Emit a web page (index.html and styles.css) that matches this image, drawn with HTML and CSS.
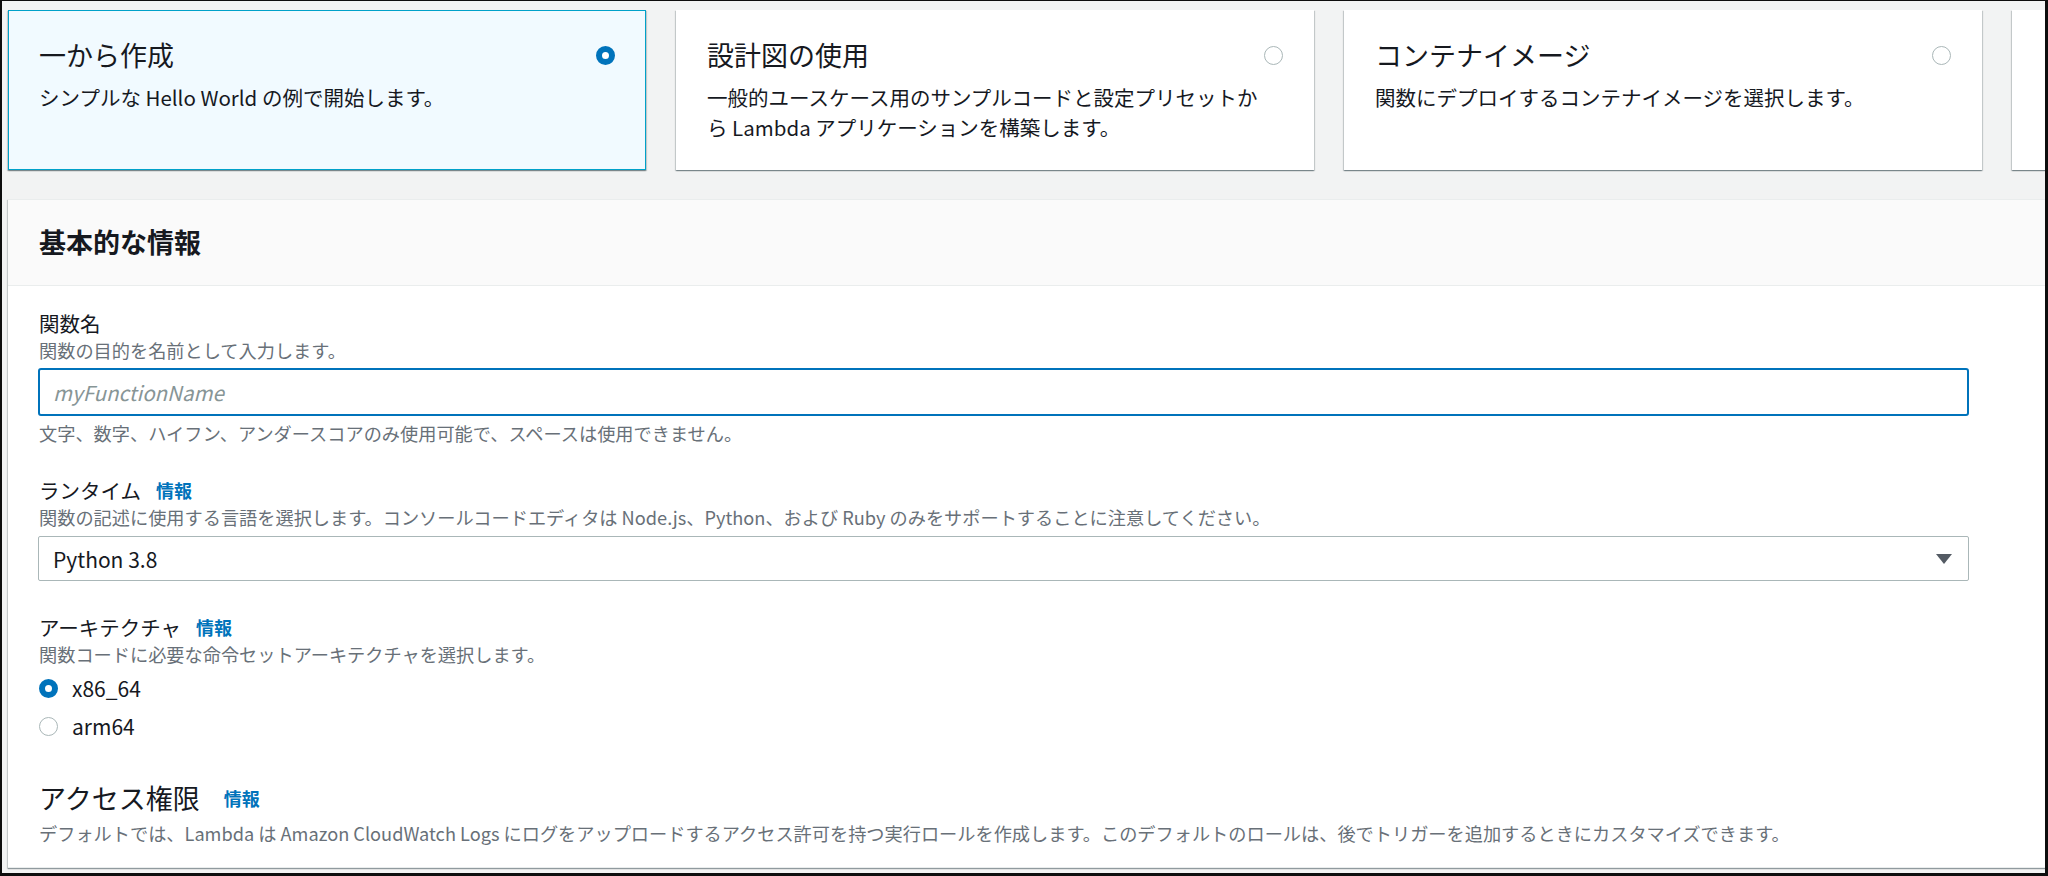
FILE: index.html
```html
<!doctype html>
<html lang="ja">
  <head>
    <meta charset="UTF-8" />
    <title>関数の作成</title>
    <link rel="stylesheet" href="styles.css">
  </head>

  <body>
    <div class="frame">
      <div class="tiles">
        <div class="tile selected">
          <div class="tile_text">
            <div class="tile_title">一から作成</div>
            <div class="tile_desc">シンプルな Hello World の例で開始します。</div>
          </div>
          <span class="radio checked"></span>
        </div>
        <div class="tile">
          <div class="tile_text">
            <div class="tile_title">設計図の使用</div>
            <div class="tile_desc">
              一般的ユースケース用のサンプルコードと設定プリセットか<br />ら Lambda アプリケーションを構築します。
            </div>
          </div>
          <span class="radio"></span>
        </div>
        <div class="tile">
          <div class="tile_text">
            <div class="tile_title">コンテナイメージ</div>
            <div class="tile_desc">関数にデプロイするコンテナイメージを選択します。</div>
          </div>
          <span class="radio"></span>
        </div>
        <div class="tile"></div>
      </div>

      <div class="panel">
        <div class="panel_header">
          <h2>基本的な情報</h2>
        </div>
        <div class="panel_body">
          <div class="form">
            <div class="label">関数名</div>
            <div class="desc">関数の目的を名前として入力します。</div>
            <input class="text_input" type="text" placeholder="myFunctionName" />
            <div class="desc constraint">文字、数字、ハイフン、アンダースコアのみ使用可能で、スペースは使用できません。</div>

            <div class="label field_gap">ランタイム <a class="info">情報</a></div>
            <div class="desc">関数の記述に使用する言語を選択します。コンソールコードエディタは Node.js、Python、および Ruby のみをサポートすることに注意してください。</div>
            <div class="select">
              <span>Python 3.8</span>
              <svg class="caret" width="16" height="10" viewBox="0 0 16 10">
                <path d="M0 0 H16 L8 10 Z" fill="#545b64" />
              </svg>
            </div>

            <div class="label field_gap2">アーキテクチャ <a class="info">情報</a></div>
            <div class="desc">関数コードに必要な命令セットアーキテクチャを選択します。</div>
            <div class="radios">
              <div class="radio_row"><span class="radio checked"></span>x86_64</div>
              <div class="radio_row"><span class="radio"></span>arm64</div>
            </div>

            <h3 class="sub_heading">アクセス権限 <a class="info">情報</a></h3>
            <div class="desc access">デフォルトでは、Lambda は Amazon CloudWatch Logs にログをアップロードするアクセス許可を持つ実行ロールを作成します。このデフォルトのロールは、後でトリガーを追加するときにカスタマイズできます。</div>
          </div>
        </div>
      </div>
    </div>
  </body>
</html>
```

FILE: styles.css
```css
body {
  margin: 0;
  font-family: "Noto Sans CJK JP", "Noto Sans", sans-serif;
  color: #16191f;
}

.frame {
  width: 2048px;
  height: 876px;
  box-sizing: border-box;
  border: solid #0d0d0d;
  border-width: 1px 3px 3px 2px;
  background-color: #f2f3f3;
  overflow: hidden;
  padding: 9px 0 0 6px;
}

.tiles {
  display: flex;
  gap: 30px;
}

.tile {
  flex: none;
  width: 638px;
  height: 160px;
  box-sizing: border-box;
  border: 1px solid transparent;
  background-color: white;
  padding: 27px 30px 0 30px;
  display: flex;
  justify-content: space-between;
  align-items: flex-start;
  box-shadow: 0 1px 1px 0 rgba(0, 28, 36, 0.3), 1px 1px 1px 0 rgba(0, 28, 36, 0.15),
    -1px 1px 1px 0 rgba(0, 28, 36, 0.15);
}

.tile.selected {
  background-color: #f1faff;
  border-color: #00a1c9;
}

.tile_title {
  font-size: 27px;
  line-height: 34px;
  margin-bottom: 10px;
}

.tile_desc {
  font-size: 20.5px;
  line-height: 30px;
}

.radio {
  flex: none;
  display: inline-block;
  width: 19px;
  height: 19px;
  box-sizing: border-box;
  border-radius: 50%;
  border: 1.5px solid #aab7b8;
  background-color: white;
}

.radio.checked {
  border: 6px solid #0073bb;
}

.tile .radio {
  margin-top: 8px;
}

.panel {
  margin-top: 29px;
  margin-right: -20px;
  background-color: white;
  border-top: 1px solid #eaeded;
  box-shadow: 0 1px 1px 0 rgba(0, 28, 36, 0.3), -1px 1px 1px 0 rgba(0, 28, 36, 0.15);
}

.panel_header {
  background-color: #fafafa;
  border-bottom: 1px solid #eaeded;
  padding: 25px 30px 26px 31px;
}

.panel_header h2 {
  margin: 0;
  font-size: 27px;
  line-height: 34px;
  font-weight: bold;
}

.panel_body {
  padding: 24px 30px 22px 30px;
  border-bottom: 1px solid #eaeded;
}

.form {
  width: 1931px;
}

.label {
  display: flex;
  align-items: center;
  font-size: 20.5px;
  line-height: 26px;
  padding-left: 1px;
}

.field_gap {
  margin-top: 32px;
}

.field_gap2 {
  margin-top: 33px;
}

.info {
  color: #0073bb;
  font-weight: bold;
  font-size: 18px;
  margin-left: 15px;
}

.desc {
  margin-top: 2px;
  font-size: 18.2px;
  line-height: 24px;
  color: #687078;
  padding-left: 1px;
}

.constraint {
  margin-top: 5px;
}

.text_input {
  display: block;
  margin-top: 6px;
  width: 100%;
  height: 48px;
  box-sizing: border-box;
  border: 2px solid #0073bb;
  border-radius: 3px;
  padding: 0 13px;
  font-family: inherit;
  font-size: 20.5px;
  outline: none;
}

.text_input::placeholder {
  color: #879596;
  font-style: italic;
}

.select {
  margin-top: 7px;
  height: 45px;
  box-sizing: border-box;
  border: 1px solid #aab7b8;
  border-radius: 2px;
  display: flex;
  align-items: center;
  justify-content: space-between;
  padding: 0 16px 0 14px;
  font-size: 21px;
}

.caret {
  display: block;
}

.radios {
  margin-top: 3px;
}

.radio_row {
  height: 38px;
  display: flex;
  align-items: center;
  gap: 14px;
  font-size: 21px;
  padding-left: 1px;
}

.sub_heading {
  margin: 36px 0 0 0;
  display: flex;
  align-items: center;
  font-size: 27px;
  line-height: 34px;
  font-weight: normal;
  padding-left: 1px;
}

.sub_heading .info {
  margin-left: 24px;
}

.access {
  margin-top: 6px;
}
```
